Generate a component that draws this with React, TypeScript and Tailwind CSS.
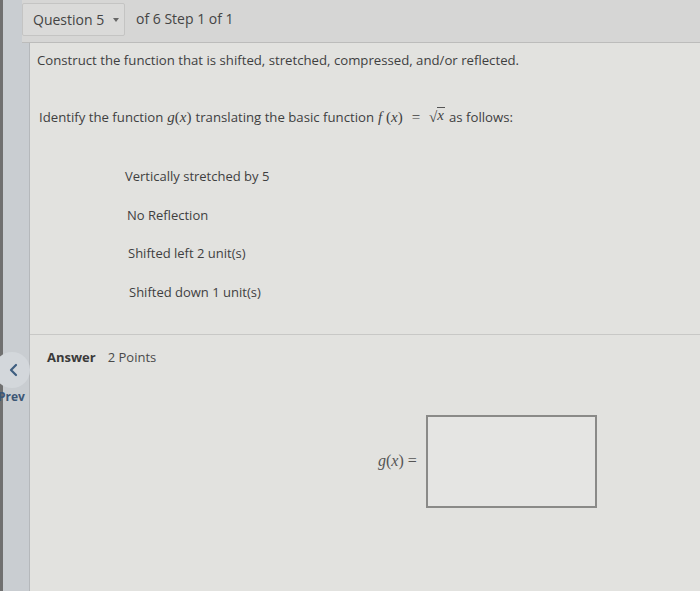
import React from 'react';

const sans = { fontFamily: '"Open Sans", "Noto Sans", sans-serif' };
const serif = { fontFamily: '"Liberation Serif", "DejaVu Serif", serif' };

function G() {
  return (
    <span style={serif} className="text-[15px]">
      <i>g</i>(<i>x</i>)
    </span>
  );
}

function F() {
  return (
    <span style={serif} className="text-[15px]">
      <i>f</i> (<i>x</i>)
    </span>
  );
}

const conditions = [
  { text: 'Vertically stretched by 5', indent: 'ml-[95px]' },
  { text: 'No Reflection', indent: 'ml-[97px]' },
  { text: 'Shifted left 2 unit(s)', indent: 'ml-[98px]' },
  { text: 'Shifted down 1 unit(s)', indent: 'ml-[99px]' },
];

export default function App() {
  return (
    <div
      style={sans}
      className="w-[700px] h-[591px] flex flex-col overflow-hidden bg-[#e2e2df] text-[#3f3f3f]"
    >
      {/* top bar */}
      <div className="flex h-[43px] shrink-0">
        <div className="w-[22px] bg-[#c9cdd1] border-l-[3px] border-[#707070]" />
        <div className="flex-1 flex items-start bg-[#d6d6d5] border-b border-[#bcbcbb]">
          <button className="mt-[3px] h-[33px] w-[103px] flex items-center gap-[9px] pl-[10px] bg-[#dadad9] border border-[#c4c4c3] rounded-[2px] text-[14px] text-[#444]">
            Question 5
            <span className="block w-0 h-0 border-l-[3px] border-r-[3px] border-t-[4px] border-l-transparent border-r-transparent border-t-[#666]" />
          </button>
          <span className="ml-[11px] mt-[8px] text-[14px] text-[#444]">of 6 Step 1 of 1</span>
        </div>
      </div>

      <div className="flex flex-1">
        {/* left nav strip */}
        <div className="w-[30px] shrink-0 bg-[#c9cdd1] border-l-[3px] border-[#707070] border-r border-r-[#b5b8bb] flex flex-col items-start">
          <div className="mt-[309px] -ml-[9px] w-[36px] h-[36px] rounded-full bg-[#d3d7db] flex items-center justify-center pl-[2px] text-[#3e5e80]">
            <svg width="10" height="14" viewBox="0 0 10 14" fill="none">
              <path d="M8 2L3 7l5 5" stroke="currentColor" strokeWidth="2.2" strokeLinecap="round" strokeLinejoin="round" />
            </svg>
          </div>
          <span className="mt-[1px] -ml-[5px] text-[12px] leading-[16px] font-bold text-[#3c5675]">Prev</span>
        </div>

        {/* content panel */}
        <div className="flex-1 flex flex-col pt-[7px]">
          <p className="ml-[7px] h-[20px] leading-[20px] text-[13.2px]">
            Construct the function that is shifted, stretched, compressed, and/or reflected.
          </p>
          <p className="ml-[9px] mt-[37px] h-[20px] leading-[20px] text-[13.2px] flex items-center gap-[4px]">
            <span>Identify the function</span>
            <G />
            <span>translating the basic function</span>
            <F />
            <span style={serif} className="text-[15px] mx-[5px]">=</span>
            <span style={serif} className="text-[15px] flex items-start">
              √<i className="border-t border-[#555] leading-[15px] pr-[1px]">x</i>
            </span>
            <span>as follows:</span>
          </p>

          <div className="mt-[39px] flex flex-col gap-[18.5px]">
            {conditions.map((c) => (
              <p key={c.text} className={`${c.indent} h-[20px] leading-[20px] text-[13px]`}>
                {c.text}
              </p>
            ))}
          </div>

          <div className="mt-[32px] border-t border-[#c8c8c6] pt-[13px] flex-1 flex flex-col">
            <div className="ml-[17px] h-[20px] flex items-center gap-[12px] text-[13px]">
              <span className="font-bold text-[#3a3a3a]">Answer</span>
              <span className="text-[#4a4a4a]">2 Points</span>
            </div>
            <div className="mt-[47px] flex items-center">
              <span style={serif} className="ml-[348px] text-[16px] text-[#555]">
                <i>g</i>(<i>x</i>) =
              </span>
              <div className="ml-[9px] w-[171px] h-[93px] border-2 border-[#8a8a88] bg-[#e5e5e3]" />
            </div>
          </div>
        </div>
      </div>
    </div>
  );
}
